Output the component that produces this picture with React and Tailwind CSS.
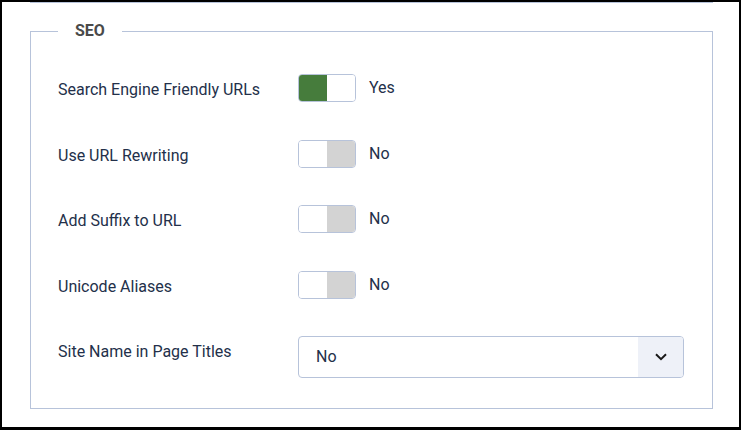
import { useState } from 'react';

const settings = [
  { label: 'Search Engine Friendly URLs', on: true },
  { label: 'Use URL Rewriting', on: false },
  { label: 'Add Suffix to URL', on: false },
  { label: 'Unicode Aliases', on: false },
];

function Toggle({ on, onClick }) {
  return (
    <button
      type="button"
      onClick={onClick}
      className="flex h-[28px] w-[58px] overflow-hidden rounded-[4px] border border-[#b7c3da] bg-white"
    >
      <span className={`h-full w-1/2 ${on ? 'bg-[#467c3c]' : 'bg-white'}`} />
      <span className={`h-full w-1/2 ${on ? 'bg-white' : 'bg-[#d3d3d3]'}`} />
    </button>
  );
}

export default function App() {
  const [values, setValues] = useState(settings.map((s) => s.on));
  const gaps = ['', 'mt-[38px]', 'mt-[37px]', 'mt-[38px]'];

  const flip = (i) => setValues((v) => v.map((x, j) => (j === i ? !x : x)));

  return (
    <div
      className="h-[430px] w-[741px] bg-black pb-[3px] pl-[2px] pr-[2px] pt-[2px] text-[#23304a]"
      style={{ fontFamily: 'Roboto, "Liberation Sans", sans-serif' }}
    >
      <div className="h-full bg-white pl-[28px] pr-[26px]">
        {/* bottom edge of the previous panel */}
        <div className="h-px bg-[#b7c3da]" />

        <fieldset className="mt-[16px] rounded-none border border-[#b7c3da] pb-[30px] pl-[27px] pt-[31px]">
          <legend className="ml-0 px-[17px] text-[16px] font-bold leading-6 text-[#4a4a4a]">SEO</legend>

          {settings.map((s, i) => (
            <div key={s.label} className={`flex items-start ${gaps[i]}`}>
              <label className="w-[240px] pt-1 text-[16px] leading-6">{s.label}</label>
              <div className="flex h-[28px] items-center gap-[13px]">
                <Toggle on={values[i]} onClick={() => flip(i)} />
                <span className="text-[16px] leading-6">{values[i] ? 'Yes' : 'No'}</span>
              </div>
            </div>
          ))}

          {/* Site name select */}
          <div className="mt-[37px] flex items-start">
            <label className="w-[240px] pt-1 text-[16px] leading-6">Site Name in Page Titles</label>
            <div className="flex h-[42px] w-[386px] overflow-hidden rounded-[4px] border border-[#b7c3da] bg-white">
              <div className="flex flex-1 items-center pl-[17px] text-[16px] leading-6">No</div>
              <div className="flex w-[45px] items-center justify-center bg-[#eef1f8]">
                <svg width="12" height="8" viewBox="0 0 12 8" fill="none">
                  <path d="M1 1.2L6 6.2L11 1.2" stroke="#1a1a1a" strokeWidth="2" />
                </svg>
              </div>
            </div>
          </div>
        </fieldset>
      </div>
    </div>
  );
}
